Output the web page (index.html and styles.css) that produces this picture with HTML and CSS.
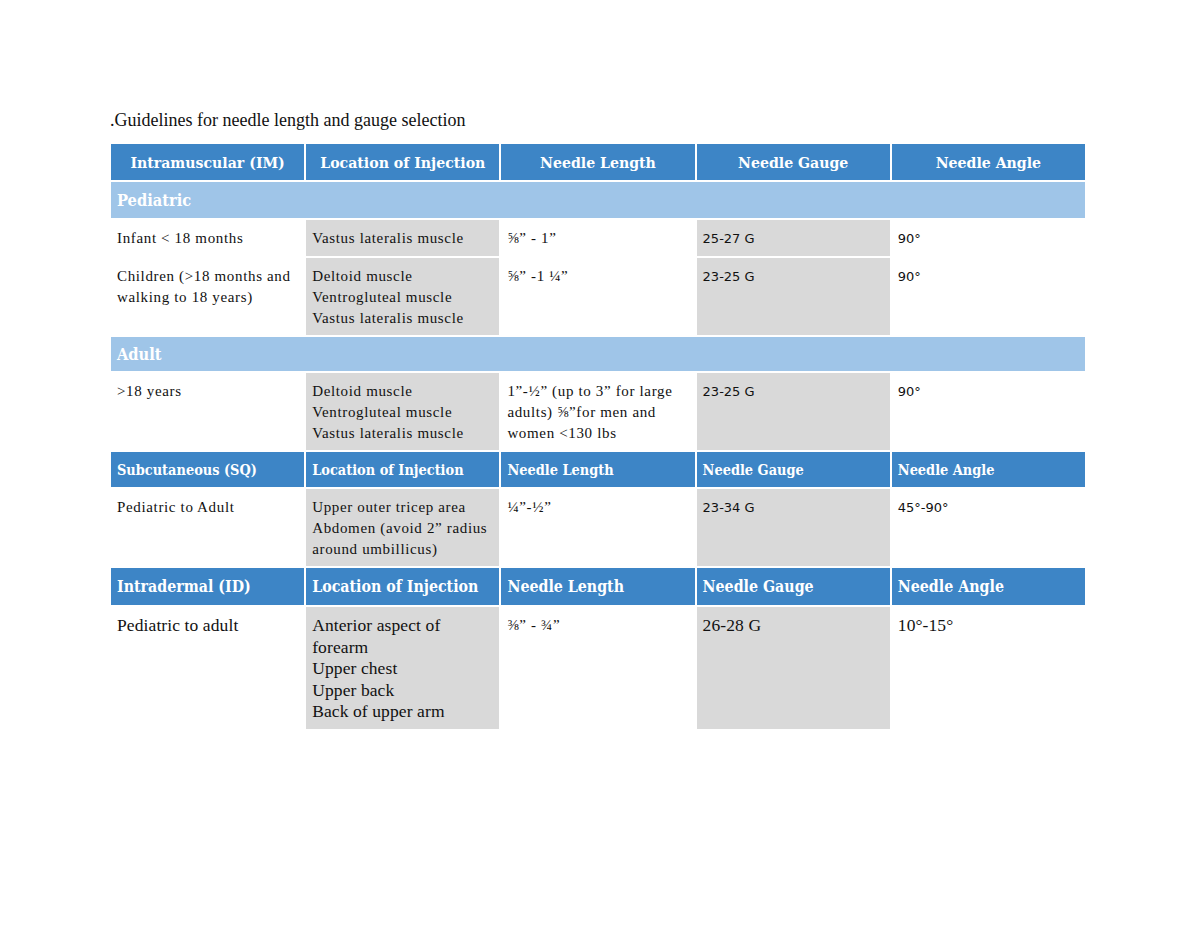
FILE: index.html
```html
<!DOCTYPE html>
<html>
<head>
<meta charset="utf-8">
<link rel="stylesheet" href="styles.css">
</head>
<body>
<div class="page">
  <p class="title">.Guidelines for needle length and gauge selection</p>
  <div class="table">
    <div class="cell h1">Intramuscular (IM)</div>
    <div class="cell h1">Location of Injection</div>
    <div class="cell h1">Needle Length</div>
    <div class="cell h1">Needle Gauge</div>
    <div class="cell h1">Needle Angle</div>

    <div class="cell band">Pediatric</div>

    <div class="cell d">Infant &lt; 18 months</div>
    <div class="cell d g">Vastus lateralis muscle</div>
    <div class="cell d">⅝” - 1”</div>
    <div class="cell d g sans">25-27 G</div>
    <div class="cell d sans">90°</div>

    <div class="cell d">Children (&gt;18 months and walking to 18 years)</div>
    <div class="cell d g">Deltoid muscle<br>Ventrogluteal muscle<br>Vastus lateralis muscle</div>
    <div class="cell d">⅝” -1 ¼”</div>
    <div class="cell d g sans">23-25 G</div>
    <div class="cell d sans">90°</div>

    <div class="cell band">Adult</div>

    <div class="cell d">&gt;18 years</div>
    <div class="cell d g">Deltoid muscle<br>Ventrogluteal muscle<br>Vastus lateralis muscle</div>
    <div class="cell d">1”-½” (up to 3” for large adults) ⅝”for men and women &lt;130 lbs</div>
    <div class="cell d g sans">23-25 G</div>
    <div class="cell d sans">90°</div>

    <div class="cell h2">Subcutaneous (SQ)</div>
    <div class="cell h2">Location of Injection</div>
    <div class="cell h2">Needle Length</div>
    <div class="cell h2">Needle Gauge</div>
    <div class="cell h2">Needle Angle</div>

    <div class="cell d">Pediatric to Adult</div>
    <div class="cell d g">Upper outer tricep area<br>Abdomen (avoid 2” radius around umbillicus)</div>
    <div class="cell d">¼”-½”</div>
    <div class="cell d g sans">23-34 G</div>
    <div class="cell d sans">45°-90°</div>

    <div class="cell h3">Intradermal (ID)</div>
    <div class="cell h3">Location of Injection</div>
    <div class="cell h3">Needle Length</div>
    <div class="cell h3">Needle Gauge</div>
    <div class="cell h3">Needle Angle</div>

    <div class="cell d big">Pediatric to adult</div>
    <div class="cell d g big">Anterior aspect of forearm<br>Upper chest<br>Upper back<br>Back of upper arm</div>
    <div class="cell d">⅜” - ¾”</div>
    <div class="cell d g big">26-28 G</div>
    <div class="cell d big">10°-15°</div>
  </div>
</div>
</body>
</html>
```

FILE: styles.css
```css
html, body {
  margin: 0;
  background: #ffffff;
}

.page {
  padding: 110px 0 0 110px;
  font-family: "Liberation Serif", "Times New Roman", serif;
  color: #111111;
}

.title {
  margin: 0 0 14px 0;
  font-size: 18px;
  line-height: 20px;
}

.table {
  width: 974px;
  margin-left: 1px;
  display: grid;
  grid-template-columns: repeat(5, 1fr);
  grid-template-rows: 36px 36px 36px 77px 34px 77px 35px 77px 37px 122px;
  gap: 2px;
}

.cell {
  box-sizing: border-box;
  min-width: 0;
}

.h1, .h2, .h3, .band {
  display: flex;
  align-items: center;
  color: #ffffff;
  font-family: "DejaVu Serif Condensed", "DejaVu Serif", serif;
  font-weight: bold;
  white-space: nowrap;
  background: #3d85c6;
}

.h1 {
  justify-content: center;
  font-size: 15.7px;
}

.h2 {
  padding-left: 6px;
  font-size: 14.4px;
}

.h3 {
  padding-left: 6px;
  font-size: 15.8px;
}

.band {
  grid-column: 1 / -1;
  padding-left: 6px;
  font-size: 16.3px;
  background: #9fc5e8;
}

.d {
  padding: 8px 6px 6px 6px;
  font-size: 15px;
  line-height: 21px;
  letter-spacing: 0.65px;
}

.g {
  background: #d9d9d9;
}

.sans {
  font-family: "DejaVu Sans", sans-serif;
  font-size: 13px;
  letter-spacing: 0;
}

.big {
  font-size: 17.5px;
  line-height: 21.5px;
  letter-spacing: 0.1px;
}
```
